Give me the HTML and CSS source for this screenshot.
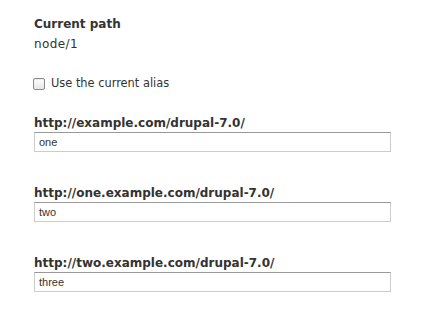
FILE: index.html
```html
<!DOCTYPE html>
<html>
<head>
<meta charset="utf-8">
<link rel="stylesheet" href="styles.css">
</head>
<body>
<div class="page">
  <div class="item item-path">
    <div class="label">Current path</div>
    <div class="value">node/1</div>
  </div>
  <label class="check-row">
    <span class="checkbox"></span>
    <span class="check-text">Use the current alias</span>
  </label>
  <div class="item field">
    <div class="label">http://example.com/drupal-7.0/</div>
    <div class="input">one</div>
  </div>
  <div class="item field">
    <div class="label">http://one.example.com/drupal-7.0/</div>
    <div class="input">two</div>
  </div>
  <div class="item field">
    <div class="label">http://two.example.com/drupal-7.0/</div>
    <div class="input">three</div>
  </div>
</div>
</body>
</html>
```

FILE: styles.css
```css
html, body {
  margin: 0;
  padding: 0;
  background: #ffffff;
}
body {
  font-family: "DejaVu Sans", "Liberation Sans", sans-serif;
  color: #333333;
  font-size: 12px;
}
.page {
  padding: 16px 37px 0 34px;
  display: flex;
  flex-direction: column;
}
.label {
  font-weight: bold;
  font-size: 12px;
  line-height: 16px;
  color: #333333;
}
.value {
  font-size: 12px;
  line-height: 16px;
  margin-top: 4px;
  letter-spacing: 0.4px;
}
.check-row {
  display: flex;
  align-items: center;
  gap: 6px;
  margin-top: 23px;
  height: 16px;
  margin-left: -1px;
}
.checkbox {
  width: 10px;
  height: 10px;
  border: 1px solid #8a8a8a;
  border-radius: 2px;
  background: linear-gradient(#ffffff, #e6e6e6);
  box-shadow: inset 0 1px 1px rgba(0,0,0,0.08);
  margin-top: 2px;
}
.check-text {
  font-size: 11.4px;
  line-height: 16px;
  color: #333333;
}
.field {
  margin-top: 24px;
}
.field + .field {
  margin-top: 33px;
}
.field .label {
  margin-bottom: 1px;
}
.input {
  box-sizing: border-box;
  height: 20px;
  width: 357px;
  border: 1px solid #cccccc;
  border-top-color: #999999;
  padding: 0 4px;
  font-family: "Liberation Sans", Arial, sans-serif;
  font-size: 11px;
  line-height: 18px;
  color: #333333;
  background: #ffffff;
}
```
